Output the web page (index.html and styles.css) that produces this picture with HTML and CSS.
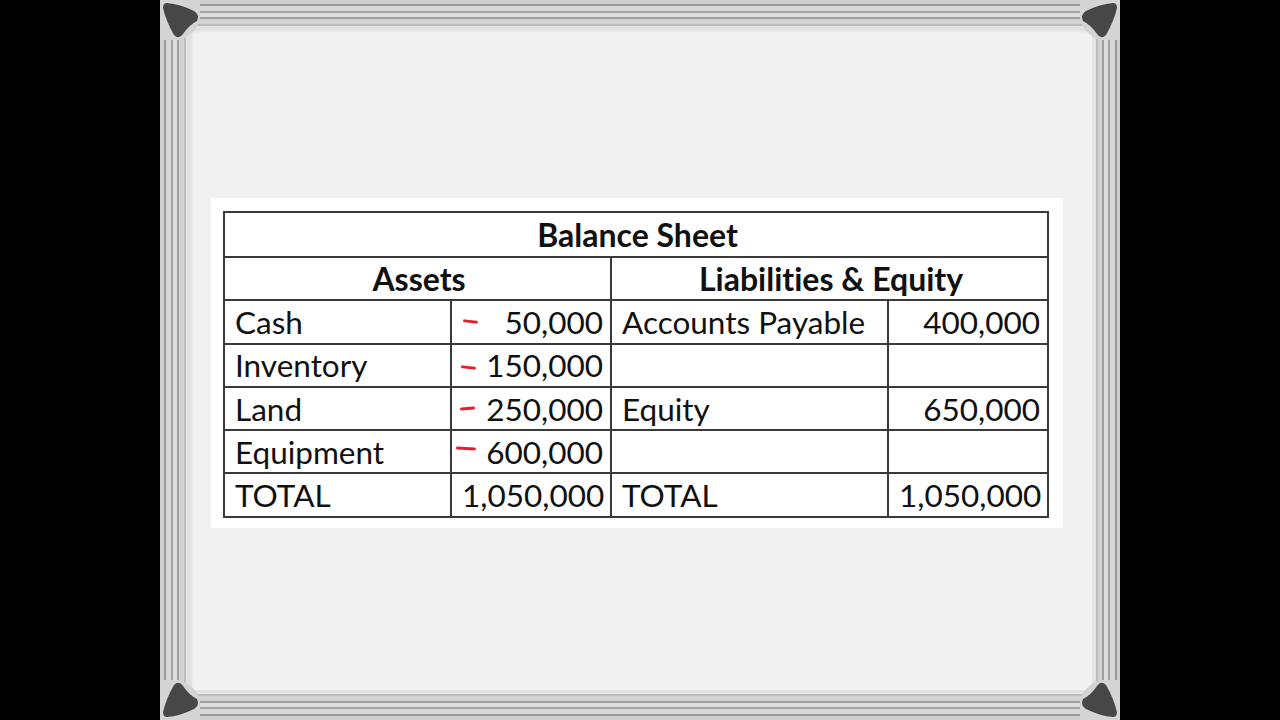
FILE: index.html
```html
<!DOCTYPE html>
<html>
<head>
<meta charset="utf-8">
<link rel="stylesheet" href="styles.css">
</head>
<body>
<div class="frame">
  <div class="column">
    <div class="rail rail-top"></div>
    <div class="board">
      <div class="panel">
        <table class="sheet">
          <colgroup>
            <col class="c1"><col class="c2"><col class="c3"><col class="c4">
          </colgroup>
          <tr class="row-title"><th colspan="4">Balance Sheet</th></tr>
          <tr class="row-head"><th colspan="2">Assets</th><th colspan="2">Liabilities &amp; Equity</th></tr>
          <tr><td>Cash</td><td class="num"><span class="mark m1"></span>50,000</td><td>Accounts Payable</td><td class="num">400,000</td></tr>
          <tr><td>Inventory</td><td class="num"><span class="mark m2"></span>150,000</td><td></td><td></td></tr>
          <tr><td>Land</td><td class="num"><span class="mark m3"></span>250,000</td><td>Equity</td><td class="num">650,000</td></tr>
          <tr><td>Equipment</td><td class="num"><span class="mark m4"></span>600,000</td><td></td><td></td></tr>
          <tr><td>TOTAL</td><td class="num">1,050,000</td><td>TOTAL</td><td class="num">1,050,000</td></tr>
        </table>
      </div>
    </div>
    <div class="rail rail-bottom"></div>
  </div>
  <svg class="knob k-tl" viewBox="0 0 40 40"><path d="M0 0 H40 V20 Q36 34 20 40 H0 Z" fill="#d4d4d4"/><path d="M7 3 Q20 4 34 11 Q40 15 37 21 Q29 25 23 34 Q19 40 14 35 Q6 21 3 8 Q3 3 7 3 Z" fill="#474747"/></svg>
  <svg class="knob k-tr" viewBox="0 0 40 40"><path d="M0 0 H40 V20 Q36 34 20 40 H0 Z" fill="#d4d4d4"/><path d="M7 3 Q20 4 34 11 Q40 15 37 21 Q29 25 23 34 Q19 40 14 35 Q6 21 3 8 Q3 3 7 3 Z" fill="#474747"/></svg>
  <svg class="knob k-bl" viewBox="0 0 40 40"><path d="M0 0 H40 V20 Q36 34 20 40 H0 Z" fill="#d4d4d4"/><path d="M7 3 Q20 4 34 11 Q40 15 37 21 Q29 25 23 34 Q19 40 14 35 Q6 21 3 8 Q3 3 7 3 Z" fill="#474747"/></svg>
  <svg class="knob k-br" viewBox="0 0 40 40"><path d="M0 0 H40 V20 Q36 34 20 40 H0 Z" fill="#d4d4d4"/><path d="M7 3 Q20 4 34 11 Q40 15 37 21 Q29 25 23 34 Q19 40 14 35 Q6 21 3 8 Q3 3 7 3 Z" fill="#474747"/></svg>
</div>
</body>
</html>
```
FILE: styles.css
```css
html, body {
  margin: 0;
  padding: 0;
  background: #000;
  width: 1280px;
  height: 720px;
  overflow: hidden;
}
body {
  display: flex;
  justify-content: center;
}
.frame {
  position: relative;
  width: 960px;
  height: 720px;
  box-sizing: border-box;
  padding: 0 28px 0 30px;
  background: repeating-linear-gradient(90deg,
    #cfcfcf 0px, #cfcfcf 4px,
    #9a9a9a 4px, #9a9a9a 6px,
    #d6d6d6 6px, #d6d6d6 11px,
    #a3a3a3 11px, #a3a3a3 13px,
    #dcdcdc 13px, #dcdcdc 17px,
    #a0a0a0 17px, #a0a0a0 19px,
    #d2d2d2 19px, #d2d2d2 24px,
    #bdbdbd 24px, #bdbdbd 26px,
    #e2e2e2 26px, #e2e2e2 30px);
}
.frame::after {
  content: "";
  position: absolute;
  top: 0; bottom: 0; right: 0;
  width: 28px;
  background: repeating-linear-gradient(90deg,
    #e2e2e2 0px, #e2e2e2 4px,
    #bdbdbd 4px, #bdbdbd 6px,
    #d2d2d2 6px, #d2d2d2 10px,
    #a0a0a0 10px, #a0a0a0 12px,
    #dcdcdc 12px, #dcdcdc 16px,
    #a3a3a3 16px, #a3a3a3 18px,
    #d6d6d6 18px, #d6d6d6 23px,
    #9a9a9a 23px, #9a9a9a 25px,
    #cfcfcf 25px, #cfcfcf 28px);
}
.column {
  display: flex;
  flex-direction: column;
  height: 100%;
}
.rail {
  flex: none;
}
.rail-top {
  height: 29px;
  background: linear-gradient(180deg,
    #cfcfcf 0px, #cfcfcf 4px,
    #9a9a9a 4px, #9a9a9a 6px,
    #d6d6d6 6px, #d6d6d6 11px,
    #a3a3a3 11px, #a3a3a3 13px,
    #dcdcdc 13px, #dcdcdc 17px,
    #a0a0a0 17px, #a0a0a0 19px,
    #d2d2d2 19px, #d2d2d2 24px,
    #bdbdbd 24px, #bdbdbd 26px,
    #e2e2e2 26px, #e2e2e2 29px);
}
.rail-bottom {
  height: 30px;
  background: linear-gradient(180deg,
    #e2e2e2 0px, #e2e2e2 4px,
    #bdbdbd 4px, #bdbdbd 6px,
    #d2d2d2 6px, #d2d2d2 11px,
    #a0a0a0 11px, #a0a0a0 13px,
    #dcdcdc 13px, #dcdcdc 17px,
    #a3a3a3 17px, #a3a3a3 19px,
    #d6d6d6 19px, #d6d6d6 24px,
    #9a9a9a 24px, #9a9a9a 26px,
    #cfcfcf 26px, #cfcfcf 30px);
}
.board {
  flex: 1;
  background: #f1f1f1;
  padding: 169px 0 0 21px;
  box-shadow: inset 2px 2px 3px rgba(0,0,0,0.08);
}
.panel {
  width: 852px;
  height: 330px;
  box-sizing: border-box;
  background: #fff;
  padding: 13px 15px 12px 12px;
}
.sheet {
  border-collapse: collapse;
  table-layout: fixed;
  width: 824px;
  font-family: Lato, "Open Sans", sans-serif;
  font-size: 31.5px;
  font-variant-ligatures: none;
  color: #111;
}
.c1 { width: 227px; }
.c2 { width: 160px; }
.c3 { width: 277px; }
.c4 { width: 160px; }
.sheet th, .sheet td {
  border: 2px solid #3a3a3a;
  height: 41.3px;
  padding: 0 7px 0 10px;
  line-height: 40px;
  white-space: nowrap;
  overflow: visible;
}
.sheet th {
  font-weight: bold;
  font-size: 32px;
  text-align: center;
}
.row-title th { height: 43px; }
.sheet td.num {
  text-align: right;
  position: relative;
}
.mark {
  position: absolute;
  height: 3px;
  background: #e0202a;
  border-radius: 2px;
}
.m1 { left: 11px; top: 19px; width: 15px; transform: rotate(6deg); }
.m2 { left: 9px; top: 21px; width: 15px; transform: rotate(6deg); }
.m3 { left: 8px; top: 19px; width: 15px; transform: rotate(-4deg); }
.m4 { left: 4px; top: 16px; width: 20px; transform: rotate(3deg); }
.knob {
  position: absolute;
  z-index: 2;
  width: 40px;
  height: 40px;
}
.k-tl { left: 0; top: 0; }
.k-tr { right: 0; top: 0; transform: scaleX(-1); }
.k-bl { left: 0; bottom: 0; transform: scaleY(-1); }
.k-br { right: 0; bottom: 0; transform: scale(-1, -1); }
```
